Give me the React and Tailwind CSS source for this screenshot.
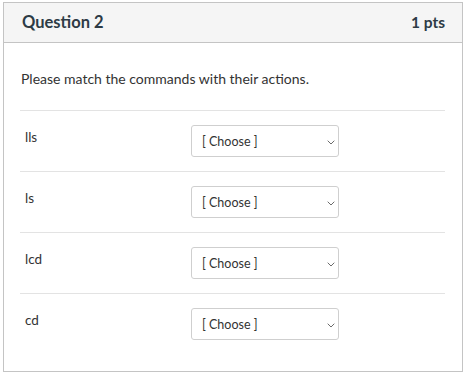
import React from "react";

const rows = ["lls", "ls", "lcd", "cd"];

function Chevron() {
  return (
    <svg width="8" height="5" viewBox="0 0 8 5" className="absolute right-[3px] top-[14px]">
      <path d="M0.7 0.7 L4 4 L7.3 0.7" fill="none" stroke="#6b6b6b" strokeWidth="1" />
    </svg>
  );
}

export default function App() {
  return (
    <div className="bg-white w-[474px] h-[379px] pt-[2px] pl-[3px]" style={{ fontFamily: "Lato, 'Noto Sans', sans-serif" }}>
      <div className="w-[460px] h-[370px] border border-[#c4c4c4] flex flex-col">
        <div className="h-[40px] bg-[#f5f5f5] border-b border-[#c4c4c4] flex items-center justify-between pl-[18px] pr-[17px] shrink-0">
          <span className="text-[16.5px] font-bold text-[#2d3b45]">Question 2</span>
          <span className="text-[15.5px] font-bold text-[#2d3b45]">1 pts</span>
        </div>
        <div className="pl-[16px] pr-[17px]">
          <p className="text-[14px] text-[#333] pt-[26px] pb-[21px] pl-[1px] leading-[20px]">
            Please match the commands with their actions.
          </p>
          {rows.map((r) => (
            <div key={r} className="border-t border-[#e3e3e3] flex h-[61px] pt-[14px]">
              <div className="w-[171px] pl-[5px] pt-[2px] text-[13.5px] leading-[20px] text-[#333]">{r}</div>
              <div className="relative w-[148px] h-[32px] border border-[#cfcfcf] rounded-[3px] bg-white flex items-center pl-[10px] pt-[2px] text-[12.5px] text-[#333]">
                [ Choose ]
                <Chevron />
              </div>
            </div>
          ))}
        </div>
      </div>
    </div>
  );
}
